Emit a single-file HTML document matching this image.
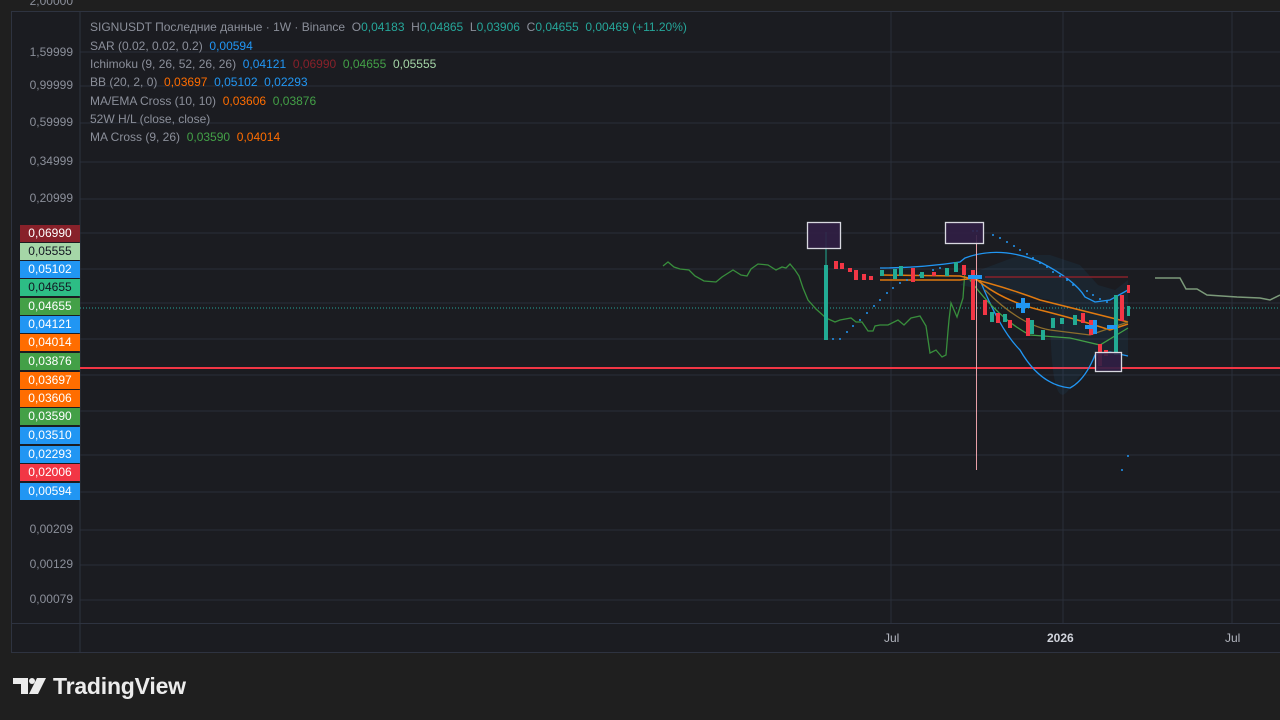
<!DOCTYPE html><html><head><meta charset="utf-8"><style>
body{margin:0;width:1280px;height:720px;background:#1f1f1f;overflow:hidden;font-family:"Liberation Sans","Noto Sans CJK SC",sans-serif}
#f{position:absolute;left:11px;top:11px;width:1269px;height:642px;background:#1b1c21;border:1px solid #2e3340;border-right:none;box-sizing:border-box}
.ax{position:absolute;left:11px;width:69px;text-align:right;padding-right:7px;box-sizing:border-box;font-size:12px;color:#8b8f9a}
.lb{position:absolute;left:20px;width:60px;height:17px;font-size:12px;line-height:17px;text-align:center;color:#fff}
.lg{position:absolute;left:90px;font-size:12px;color:#8b8f9a;white-space:nowrap}
.g{color:#26a69a}.b{color:#2196f3}.o{color:#ff6d00}.r{color:#88212a}.gr{color:#43a047}.lgr{color:#a5d6a7}.tq{color:#2dbd85}
</style></head><body>
<div id="f"></div>
<svg width="1280" height="720" style="position:absolute;left:0;top:0">
<g stroke="#2a2e39" stroke-width="1">
<line x1="80" y1="52" x2="1280" y2="52"/><line x1="80" y1="86" x2="1280" y2="86"/><line x1="80" y1="123" x2="1280" y2="123"/><line x1="80" y1="162" x2="1280" y2="162"/><line x1="80" y1="199" x2="1280" y2="199"/><line x1="80" y1="233" x2="1280" y2="233"/><line x1="80" y1="269" x2="1280" y2="269"/><line x1="80" y1="303" x2="1280" y2="303"/><line x1="80" y1="339" x2="1280" y2="339"/><line x1="80" y1="375" x2="1280" y2="375"/><line x1="80" y1="411" x2="1280" y2="411"/><line x1="80" y1="455" x2="1280" y2="455"/><line x1="80" y1="492" x2="1280" y2="492"/><line x1="80" y1="530" x2="1280" y2="530"/><line x1="80" y1="565" x2="1280" y2="565"/><line x1="80" y1="600" x2="1280" y2="600"/>
<line x1="891" y1="12" x2="891" y2="623"/><line x1="1063" y1="12" x2="1063" y2="623"/><line x1="1232" y1="12" x2="1232" y2="623"/>
</g>
<line x1="11" y1="11.5" x2="1280" y2="11.5" stroke="#2e3340"/>
<line x1="80" y1="12" x2="80" y2="653" stroke="#2e3340"/>
<line x1="11" y1="623.5" x2="1280" y2="623.5" stroke="#2e3340"/>
<line x1="80" y1="308" x2="1280" y2="308" stroke="#26a69a" stroke-dasharray="1 2"/>
<line x1="80" y1="368" x2="1280" y2="368" stroke="#f23645" stroke-width="2"/>
<path d="M1050 300 Q1050 420 1070 388 L1085 370 L1098 355 L1115 355 L1128 356 L1128 280 L1115 290 L1098 285 L1080 265 L1050 255 L1020 255 L980 270 L960 285 L985 290Z" fill="#2196f3" fill-opacity=".07"/>
<polyline points="663,266 668,262 674,267 680,269 689,270 695,276 704,281 716,282 722,277 733,270 741,275 747,276 751,269 758,264 768,265 776,270 782,267 786,268 790,264 795,270 799,276 803,288 808,300 816,309 826,318 835,322 840,320 851,318 856,322 862,322 868,331 873,331 875,326 880,325 888,325 898,320 904,325 911,318 920,316 926,326 930,353 936,350 942,357 946,355 948,331 949,320 951,303 957,317 963,298 965,270" fill="none" stroke="#388e3c" stroke-width="1.3"/>
<polyline points="1155,278 1180,278 1186,289 1197,289 1207,295 1237,297 1260,298 1270,300 1280,295" fill="none" stroke="#7c9a7a" stroke-width="1.5"/>
<path d="M880 268 Q920 268 960 262 L965 258 Q1000 245 1040 262 Q1075 280 1085 297 L1095 302 L1110 300 L1128 290" fill="none" stroke="#2196f3" stroke-width="1.3"/>
<path d="M980 280 Q1000 330 1020 350 Q1040 385 1070 388 Q1085 380 1095 355 L1110 352 L1128 356" fill="none" stroke="#2196f3" stroke-width="1.3"/>
<path d="M880 280 L960 280 L975 278 Q1000 300 1040 310 Q1080 320 1110 330 L1128 324" fill="none" stroke="#e07a10" stroke-width="1.5"/>
<path d="M880 275 L960 276 Q1000 285 1040 300 Q1080 310 1128 322" fill="none" stroke="#e07a10" stroke-width="1.5"/>
<path d="M970 280 Q1000 320 1030 335 L1070 338 L1100 345 L1128 328" fill="none" stroke="#43a047" stroke-width="1.3"/>
<path d="M985 290 Q1020 325 1050 330 L1090 335 L1128 322" fill="none" stroke="#8d6e2c" stroke-width="1.3"/>
<line x1="985" y1="277" x2="1128" y2="277" stroke="#88212a" stroke-width="1.5"/>
<g fill="#2196f3">
<circle cx="833" cy="339" r="1"/><circle cx="840" cy="339" r="1"/><circle cx="847" cy="332" r="1"/><circle cx="853" cy="326" r="1"/><circle cx="860" cy="320" r="1"/><circle cx="867" cy="313" r="1"/><circle cx="874" cy="306" r="1"/><circle cx="880" cy="300" r="1"/><circle cx="887" cy="293" r="1"/><circle cx="893" cy="288" r="1"/><circle cx="900" cy="283" r="1"/><circle cx="907" cy="280" r="1"/><circle cx="913" cy="277" r="1"/><circle cx="920" cy="275" r="1"/><circle cx="933" cy="270" r="1"/><circle cx="940" cy="268" r="1"/>
<circle cx="973" cy="231" r="1"/><circle cx="977" cy="231" r="1"/><circle cx="993" cy="235" r="1"/><circle cx="1000" cy="238" r="1"/><circle cx="1007" cy="242" r="1"/><circle cx="1014" cy="246" r="1"/><circle cx="1020" cy="250" r="1"/><circle cx="1027" cy="254" r="1"/><circle cx="1033" cy="258" r="1"/><circle cx="1040" cy="263" r="1"/><circle cx="1047" cy="267" r="1"/><circle cx="1053" cy="272" r="1"/><circle cx="1060" cy="276" r="1"/><circle cx="1067" cy="280" r="1"/><circle cx="1073" cy="285" r="1"/><circle cx="1087" cy="291" r="1"/><circle cx="1093" cy="295" r="1"/><circle cx="1100" cy="299" r="1"/><circle cx="1107" cy="302" r="1"/><circle cx="1128" cy="456" r="1"/><circle cx="1122" cy="470" r="1"/>
</g>
<line x1="826" y1="232" x2="826" y2="340" stroke="#22ab94"/><rect x="824" y="265" width="4" height="75" fill="#22ab94"/>
<line x1="976.5" y1="235" x2="976.5" y2="470" stroke="#e8a0a8"/>
<g fill="#f23645"><rect x="834" y="261" width="4" height="8"/><rect x="840" y="263" width="4" height="6"/><rect x="848" y="268" width="4" height="4"/><rect x="854" y="270" width="4" height="10"/><rect x="862" y="274" width="4" height="6"/><rect x="869" y="276" width="4" height="4"/><rect x="911" y="268" width="4" height="14"/><rect x="932" y="272" width="4" height="4"/><rect x="962" y="265" width="4" height="10"/><rect x="971" y="270" width="4" height="50"/><rect x="983" y="300" width="4" height="15"/><rect x="996" y="313" width="4" height="10"/><rect x="1008" y="320" width="4" height="8"/><rect x="1026" y="318" width="4" height="18"/><rect x="1081" y="313" width="4" height="10"/><rect x="1089" y="320" width="4" height="15"/><rect x="1098" y="344" width="4" height="22"/><rect x="1104" y="350" width="4" height="6"/><rect x="1120" y="295" width="4" height="26"/><rect x="1127" y="285" width="3" height="8"/></g>
<g fill="#22ab94"><rect x="880" y="270" width="4" height="6"/><rect x="893" y="269" width="4" height="10"/><rect x="899" y="266" width="4" height="10"/><rect x="920" y="272" width="4" height="6"/><rect x="945" y="268" width="4" height="8"/><rect x="954" y="262" width="4" height="10"/><rect x="990" y="312" width="4" height="10"/><rect x="1003" y="314" width="4" height="8"/><rect x="1030" y="320" width="4" height="14"/><rect x="1041" y="330" width="4" height="10"/><rect x="1051" y="318" width="4" height="10"/><rect x="1060" y="318" width="4" height="6"/><rect x="1073" y="315" width="4" height="10"/><rect x="1114" y="295" width="4" height="60"/><rect x="1127" y="306" width="3" height="10"/></g>
<g fill="#2196f3"><rect x="968" y="275" width="14" height="4"/><rect x="1016" y="303" width="14" height="5"/><rect x="1021" y="298" width="4" height="15"/><rect x="1085" y="325" width="12" height="4"/><rect x="1093" y="320" width="4" height="14"/><rect x="1107" y="325" width="10" height="4"/></g>
<g fill="#311f45" fill-opacity=".9" stroke="#d8d8e0" stroke-width="1.3">
<rect x="807.5" y="222.5" width="33" height="26"/><rect x="945.5" y="222.5" width="38" height="21"/><rect x="1095.5" y="352.5" width="26" height="19"/></g>
<g fill="#ececec"><path d="M13 678H28V694H21V684H13Z"/><circle cx="32" cy="681" r="3"/><path d="M37 678H46L38 694H29Z"/></g>
</svg>
<div class="ax" style="top:-6px">2,00000</div>
<div class="lg" style="top:20px">SIGNUSDT Последние данные · 1W · Binance &nbsp;O<span class="g">0,04183</span> &nbsp;H<span class="g">0,04865</span> &nbsp;L<span class="g">0,03906</span> &nbsp;C<span class="g">0,04655</span> &nbsp;<span class="g">0,00469 (+11.20%)</span></div>
<div class="lg" style="top:39px">SAR (0.02, 0.02, 0.2) &nbsp;<span class="b">0,00594</span></div>
<div class="lg" style="top:57px">Ichimoku (9, 26, 52, 26, 26) &nbsp;<span class="b">0,04121</span> &nbsp;<span class="r">0,06990</span> &nbsp;<span class="gr">0,04655</span> &nbsp;<span class="lgr">0,05555</span></div>
<div class="lg" style="top:75px">BB (20, 2, 0) &nbsp;<span class="o">0,03697</span> &nbsp;<span class="b">0,05102</span> &nbsp;<span class="b">0,02293</span></div>
<div class="lg" style="top:94px">MA/EMA Cross (10, 10) &nbsp;<span class="o">0,03606</span> &nbsp;<span class="gr">0,03876</span></div>
<div class="lg" style="top:112px">52W H/L (close, close)</div>
<div class="lg" style="top:130px">MA Cross (9, 26) &nbsp;<span class="gr">0,03590</span> &nbsp;<span class="o">0,04014</span></div>
<div class="ax" style="top:45px">1,59999</div>
<div class="ax" style="top:78px">0,99999</div>
<div class="ax" style="top:115px">0,59999</div>
<div class="ax" style="top:154px">0,34999</div>
<div class="ax" style="top:191px">0,20999</div>
<div class="ax" style="top:522px">0,00209</div>
<div class="ax" style="top:557px">0,00129</div>
<div class="ax" style="top:592px">0,00079</div>
<div class="lb" style="top:225px;background:#88212a">0,06990</div>
<div class="lb" style="top:243px;background:#a5d6a7;color:#131722">0,05555</div>
<div class="lb" style="top:261px;background:#2196f3">0,05102</div>
<div class="lb" style="top:279px;background:#2dbd85;color:#131722">0,04655</div>
<div class="lb" style="top:298px;background:#43a047">0,04655</div>
<div class="lb" style="top:316px;background:#2196f3">0,04121</div>
<div class="lb" style="top:334px;background:#ff6d00">0,04014</div>
<div class="lb" style="top:353px;background:#43a047">0,03876</div>
<div class="lb" style="top:372px;background:#ff6d00">0,03697</div>
<div class="lb" style="top:390px;background:#ff6d00">0,03606</div>
<div class="lb" style="top:408px;background:#43a047">0,03590</div>
<div class="lb" style="top:427px;background:#2196f3">0,03510</div>
<div class="lb" style="top:446px;background:#2196f3">0,02293</div>
<div class="lb" style="top:464px;background:#f23645">0,02006</div>
<div class="lb" style="top:483px;background:#2196f3">0,00594</div>
<div style="position:absolute;top:631px;left:884px;font-size:12px;color:#b2b5be">Jul</div>
<div style="position:absolute;top:631px;left:1047px;font-size:12px;color:#d1d4dc;font-weight:bold">2026</div>
<div style="position:absolute;top:631px;left:1225px;font-size:12px;color:#b2b5be">Jul</div>
<div style="position:absolute;top:673px;left:53px;font-size:23px;font-weight:bold;color:#ececec;letter-spacing:-0.2px">TradingView</div>
</body></html>
